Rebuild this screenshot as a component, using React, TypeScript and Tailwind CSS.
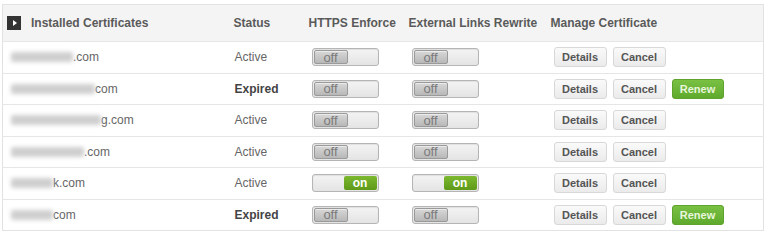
import React from 'react';

type Cert = {
  prefixW: number;
  suffix: string;
  status: 'Active' | 'Expired';
  https: boolean;
  ext: boolean;
};

const certs: Cert[] = [
  { prefixW: 62, suffix: '.com', status: 'Active', https: false, ext: false },
  { prefixW: 84, suffix: 'com', status: 'Expired', https: false, ext: false },
  { prefixW: 90, suffix: 'g.com', status: 'Active', https: false, ext: false },
  { prefixW: 73, suffix: '.com', status: 'Active', https: false, ext: false },
  { prefixW: 42, suffix: 'k.com', status: 'Active', https: true, ext: true },
  { prefixW: 42, suffix: 'com', status: 'Expired', https: false, ext: false },
];

function Toggle({ on }: { on: boolean }) {
  return (
    <div className="relative h-[18px] w-[67px] rounded-[3px] border border-[#b5b5b5] bg-gradient-to-b from-[#f4f4f4] to-[#e4e4e4] shadow-[inset_0_1px_1px_rgba(0,0,0,0.08)]">
      {on ? (
        <div className="absolute right-[1px] top-[1px] flex h-[14px] w-[33px] items-center justify-center rounded-[2px] bg-gradient-to-b from-[#7cb82f] to-[#5e9a17] text-[12px] font-bold leading-none text-white">
          on
        </div>
      ) : (
        <div className="absolute left-[1px] top-[1px] flex h-[14px] w-[34px] items-center justify-center rounded-[2px] border border-[#9a9a9a] bg-gradient-to-b from-[#d8d8d8] to-[#b8b8b8] text-[13px] leading-none text-[#7a7a7a] shadow-[inset_0_1px_0_rgba(255,255,255,0.5)]">
          off
        </div>
      )}
    </div>
  );
}

function Btn({ label, green = false }: { label: string; green?: boolean }) {
  if (green) {
    return (
      <button className="h-[20px] w-[52px] rounded-[3px] border border-[#5fa22d] bg-gradient-to-b from-[#79c043] to-[#5eaa2c] text-[11px] font-bold text-[#e8f6dc]">
        {label}
      </button>
    );
  }
  return (
    <button className="h-[20px] w-[53px] rounded-[3px] border border-[#d8d8d8] bg-gradient-to-b from-[#fafafa] to-[#ebebeb] text-[11px] font-bold text-[#555]">
      {label}
    </button>
  );
}

export default function App() {
  return (
    <div className="h-[235px] w-[768px] bg-white pl-[2px] pt-[4px] font-['Liberation_Sans',Arial,sans-serif]">
      <table className="w-[762px] border-collapse border border-[#e2e2e2] text-[12px] text-[#555]">
        <thead className="bg-[#f4f4f4]">
          <tr className="h-[37px] text-left font-bold text-[#5a5a5a]">
            <th className="w-[224px] pl-[4px] font-bold">
              <div className="flex items-center gap-[10px]">
                <div className="flex h-[14px] w-[14px] items-center justify-center bg-[#333]">
                  <div className="ml-[1px] h-0 w-0 border-y-[3px] border-l-[4px] border-y-transparent border-l-white" />
                </div>
                <span>Installed Certificates</span>
              </div>
            </th>
            <th className="w-[80px] pl-[7px] font-bold">Status</th>
            <th className="w-[100px] pl-[2px] font-bold">HTTPS Enforce</th>
            <th className="w-[142px] pl-[2px] font-bold">External Links Rewrite</th>
            <th className="pl-[2px] font-bold">Manage Certificate</th>
          </tr>
        </thead>
        <tbody>
          {certs.map((c, i) => (
            <tr key={i} className="h-[31.5px] border-t border-[#e6e6e6]">
              <td className="pl-[8px]">
                <div className="flex items-center">
                  <div
                    className="h-[10px] rounded-[2px] bg-[#cfcfcf] blur-[2px]"
                    style={{ width: c.prefixW }}
                  />
                  <span className="text-[#666]">{c.suffix}</span>
                </div>
              </td>
              <td className="pl-[8px]">
                {c.status === 'Expired' ? (
                  <span className="font-bold text-[#444]">Expired</span>
                ) : (
                  <span className="text-[#666]">Active</span>
                )}
              </td>
              <td className="pl-[5px]">
                <Toggle on={c.https} />
              </td>
              <td className="pl-[5px]">
                <Toggle on={c.ext} />
              </td>
              <td className="pl-[5px]">
                <div className="flex gap-[6px]">
                  <Btn label="Details" />
                  <Btn label="Cancel" />
                  {c.status === 'Expired' && <Btn label="Renew" green />}
                </div>
              </td>
            </tr>
          ))}
        </tbody>
      </table>
    </div>
  );
}
